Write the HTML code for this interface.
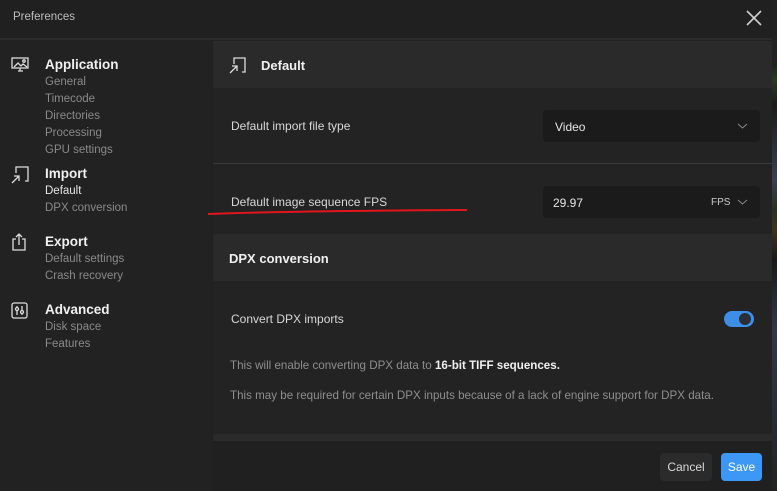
<!DOCTYPE html>
<html><head><meta charset="utf-8"><style>
*{margin:0;padding:0;box-sizing:border-box}
body{width:777px;height:491px;background:#1c1c1c;font-family:"Liberation Sans",sans-serif;position:relative;overflow:hidden;font-size:12px}
.dlg{position:absolute;left:0;top:0;width:772px;height:491px;background:#202020}
.edge{position:absolute;left:772px;top:0;width:5px;height:491px;background:linear-gradient(#222 0,#222 62px,#1a2418 62px,#2a3a20 80px,#1b1b1b 105px,#3a4050 180px,#2a3020 210px,#3b3420 230px,#1a1a1a 260px,#303848 330px,#222 491px)}
.title{position:absolute;left:13px;top:11px;color:#bdbdbd;font-size:11.5px}
.close{position:absolute;left:745px;top:9px}
.tline{position:absolute;left:0;top:38px;width:772px;height:2px;background:#2c2c2c}
.side{position:absolute;left:0;top:40px;width:212px;height:451px;background:#222}
.grp{position:absolute;left:45px}
.grp b{display:block;color:#f0f0f0;font-size:13.5px;font-weight:bold;margin-bottom:2px}
.grp span{display:block;color:#8a8a8a;font-size:11.5px;line-height:17px}
.grp span.on{color:#e6e6e6}
.ic{position:absolute;left:11px}
.main{position:absolute;left:213px;top:41px;width:559px;height:400px;background:#232323}
.hdr{position:absolute;left:0;width:559px;height:47px;background:#2a2a2a;color:#f0f0f0;font-weight:bold;font-size:13px}
.lbl{position:absolute;left:18px;color:#d8d8d8;font-size:12px}
.sel{position:absolute;left:330px;width:217px;height:32px;background:#1b1b1b;border-radius:4px;color:#e6e6e6;font-size:12px}
.foot{position:absolute;left:213px;top:434px;width:559px;height:7px;background:#2a2a2a}
.btn{position:absolute;top:453px;height:28px;border-radius:4px;font-size:12px;text-align:center;line-height:28px}
</style></head><body>
<div class="dlg">
<div class="title">Preferences</div>
<svg class="close" width="18" height="18" viewBox="0 0 18 18"><path d="M2 2L16 16M16 2L2 16" stroke="#cfcfcf" stroke-width="1.6"/></svg>
<div class="tline"></div>
<div class="side">
 <svg class="ic" style="top:17px" width="18" height="16" viewBox="0 0 18 16" fill="none" stroke="#ddd" stroke-width="1.3"><rect x="1" y="1" width="16" height="10"/><path d="M3 10l4-4 3 3 2-2 4 3M7 14h5M9 11v3"/><circle cx="13" cy="4" r="1.2"/></svg>
 <div class="grp" style="top:17px"><b>Application</b><span>General</span><span>Timecode</span><span>Directories</span><span>Processing</span><span>GPU settings</span></div>
 <svg class="ic" style="top:126px" width="18" height="18" viewBox="0 0 18 18" fill="none" stroke="#ddd" stroke-width="1.3"><path d="M5 7V1h12v14h-3M1 17l7-7M3 10h5v5"/></svg>
 <div class="grp" style="top:126px"><b>Import</b><span class="on">Default</span><span>DPX conversion</span></div>
 <svg class="ic" style="top:193px" width="16" height="18" viewBox="0 0 16 18" fill="none" stroke="#ddd" stroke-width="1.3"><path d="M5 6H2v11h12V6h-3M8 12V1M5 4l3-3 3 3"/></svg>
 <div class="grp" style="top:194px"><b>Export</b><span>Default settings</span><span>Crash recovery</span></div>
 <svg class="ic" style="top:262px" width="17" height="17" viewBox="0 0 17 17" fill="none" stroke="#ddd" stroke-width="1.3"><rect x="1" y="1" width="15" height="15" rx="2"/><path d="M6 4v9M11 4v9"/><circle cx="6" cy="7" r="1.5" fill="#222"/><circle cx="11" cy="10" r="1.5" fill="#222"/></svg>
 <div class="grp" style="top:262px"><b>Advanced</b><span>Disk space</span><span>Features</span></div>
</div>
<div class="main">
 <div class="hdr" style="top:0"><svg style="position:absolute;left:16px;top:16px" width="17" height="17" viewBox="0 0 17 17" fill="none" stroke="#ddd" stroke-width="1.3"><path d="M5 7V1h11v14h-3M1 16l7-7M3 9h5v5"/></svg><span style="position:absolute;left:48px;top:17px">Default</span></div>
 <div class="lbl" style="top:78px">Default import file type</div>
 <div class="sel" style="top:69px"><span style="position:absolute;left:12px;top:10px">Video</span><svg style="position:absolute;right:12px;top:13px" width="11" height="6" viewBox="0 0 11 6"><path d="M1 1l4.5 4 4.5-4" stroke="#888" fill="none"/></svg></div>
 <div style="position:absolute;left:0;top:122px;width:559px;height:1px;background:#3a3a3a"></div>
 <div class="lbl" style="top:154px">Default image sequence FPS</div>
 <div class="sel" style="top:145px"><span style="position:absolute;left:10px;top:10px">29.97</span><span style="position:absolute;left:168px;top:11px;font-size:10px;color:#ccc">FPS</span><svg style="position:absolute;right:12px;top:13px" width="11" height="6" viewBox="0 0 11 6"><path d="M1 1l4.5 4 4.5-4" stroke="#888" fill="none"/></svg></div>
 <div class="hdr" style="top:193px"><span style="position:absolute;left:16px;top:17px">DPX conversion</span></div>
 <div class="lbl" style="top:271px">Convert DPX imports</div>
 <div style="position:absolute;left:511px;top:270px;width:30px;height:16px;border-radius:8px;background:#3d8ee6"><div style="position:absolute;right:3px;top:2px;width:12px;height:12px;border-radius:6px;background:#2a2e36"></div></div>
 <div style="position:absolute;left:17px;top:318px;color:#8e8e8e;font-size:11.6px">This will enable converting DPX data to <b style="color:#f0f0f0">16-bit TIFF sequences.</b></div>
 <div style="position:absolute;left:17px;top:348px;color:#8e8e8e;font-size:11.6px">This may be required for certain DPX inputs because of a lack of engine support for DPX data.</div>
</div>
<svg style="position:absolute;left:207px;top:207px" width="262" height="9" viewBox="0 0 262 9"><path d="M1 7Q60 5 140 4T260 3" stroke="#e0161c" stroke-width="2" fill="none"/></svg>
<div class="foot"></div>
<div class="btn" style="left:660px;width:52px;background:#2b2b2b;color:#d8d8d8">Cancel</div>
<div class="btn" style="left:721px;width:41px;background:#3d98f5;color:#fff">Save</div>
</div>
<div class="edge"></div>
</body></html>
